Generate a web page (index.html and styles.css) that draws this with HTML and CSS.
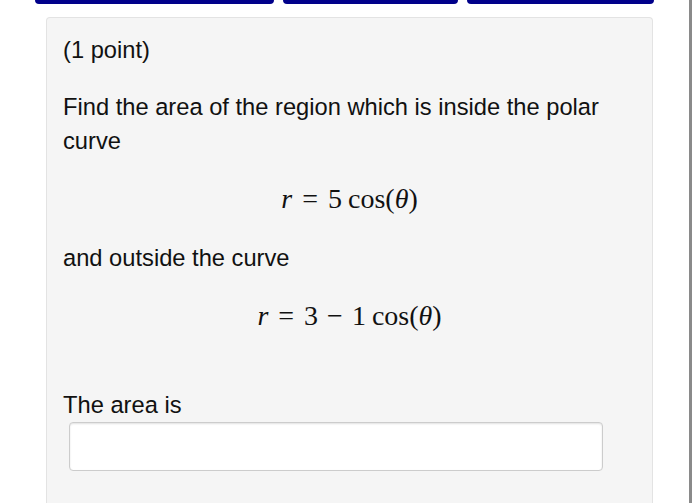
FILE: index.html
```html
<!DOCTYPE html>
<html>
<head>
<meta charset="utf-8">
<link rel="stylesheet" href="styles.css">
</head>
<body>
<div class="page">
  <div class="main">
    <div class="tabs">
      <div class="tab tab1"></div>
      <div class="tab tab2"></div>
      <div class="tab tab3"></div>
    </div>
    <div class="card">
      <p class="points">(1 point)</p>
      <p class="text first">Find the area of the region which is inside the polar curve</p>
      <div class="math"><i>r</i><span class="rel">=</span>5<span class="thin"></span>cos(<i>θ</i>)</div>
      <p class="text">and outside the curve</p>
      <div class="math"><i>r</i><span class="rel">=</span>3<span class="bin">−</span>1<span class="thin"></span>cos(<i>θ</i>)</div>
      <p class="label">The area is</p>
      <div class="answer"></div>
    </div>
  </div>
  <div class="scrollbar"></div>
</div>
</body>
</html>
```
FILE: styles.css
```css
html, body {
  margin: 0;
  padding: 0;
  background: #ffffff;
  height: 100%;
  overflow: hidden;
}
.page {
  display: flex;
  height: 503px;
}
.main {
  width: 689px;
  display: flex;
  flex-direction: column;
}
.tabs {
  display: flex;
  gap: 9px;
  margin-left: 35px;
  height: 4px;
}
.tab {
  background: #00008a;
  border-radius: 0 0 4px 4px;
  height: 4px;
}
.tab1 { width: 239px; }
.tab2 { width: 175px; }
.tab3 { width: 187px; }
.card {
  margin: 13px 0 0 46px;
  width: 607px;
  flex: 1;
  background: #f5f5f5;
  border: 1px solid #e3e3e3;
  border-bottom: none;
  border-radius: 4px 4px 0 0;
  padding: 0 16px;
  box-sizing: border-box;
  font-family: "Liberation Sans", Arial, sans-serif;
  font-size: 23.7px;
  color: #111;
}
.points {
  line-height: 30px;
  margin: 17px 0 0 0;
}
.text {
  line-height: 34px;
  margin: 25px 0 0 0;
}
.math {
  font-family: "Liberation Serif", "Times New Roman", serif;
  font-size: 28px;
  text-align: center;
  line-height: 34px;
  margin: 24px 0 0 0;
  color: #111;
}
.math i { font-style: italic; }
.rel { margin: 0 10px; }
.bin { margin: 0 9px; }
.thin { display: inline-block; width: 6px; }
.label {
  line-height: 30px;
  margin: 57px 0 0 0;
}
.answer {
  margin: 2px 0 0 6px;
  width: 534px;
  height: 49px;
  box-sizing: border-box;
  background: #fff;
  border: 1px solid #cccccc;
  border-radius: 4px;
  box-shadow: inset 0 1px 2px rgba(0,0,0,0.12);
}
.scrollbar {
  width: 3px;
  background: #8a8a8a;
  height: 100%;
}
```
